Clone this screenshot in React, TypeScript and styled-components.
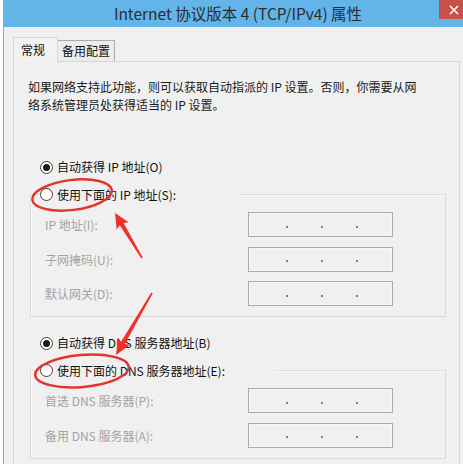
import React from "react";
import styled, { createGlobalStyle } from "styled-components";

const GlobalStyle = createGlobalStyle`
  html, body { margin: 0; padding: 0; background: #f0f0f0; }
  body {
    font-family: "Noto Sans CJK SC", "Noto Sans", "Liberation Sans", sans-serif;
    font-size: 12px;
    color: #1a1a1a;
  }
  * { box-sizing: border-box; }
`;

const Frame = styled.div`
  position: relative;
  width: 463px;
  height: 464px;
  overflow: hidden;
  display: flex;
  background: #ffffff;
  padding-left: 3px;
`;

const Window = styled.div`
  flex: 1;
  display: flex;
  flex-direction: column;
  border-left: 1px solid #8ea6c2;
  background: #f0f0f0;
  min-width: 0;
`;

const TitleBar = styled.div`
  height: 27px;
  flex-shrink: 0;
  display: flex;
  align-items: flex-start;
  background: #62b4e9;
`;

const Title = styled.div`
  flex: 1;
  min-width: 0;
  height: 27px;
  padding-left: 33px;
  text-align: center;
  font-size: 15.5px;
  line-height: 27px;
  color: #2d2d2d;
  white-space: nowrap;
`;

const CloseButton = styled.div`
  flex-shrink: 0;
  width: 30px;
  height: 19px;
  margin-right: -6px;
  background: #c94f4a;
  display: flex;
  align-items: center;
  justify-content: center;
`;

const Body = styled.div`
  flex: 1;
  display: flex;
  flex-direction: column;
  padding: 10px 3px 0 9px;
  min-height: 0;
`;

const TabStrip = styled.div`
  display: flex;
  align-items: flex-end;
  position: relative;
  z-index: 1;
  margin-bottom: -1px;
`;

const Tab = styled.div<{ $active?: boolean }>`
  background: ${(p) => (p.$active ? "#f2f2f2" : "#ececec")};
  border: 1px solid ${(p) => (p.$active ? "#d6d6d6" : "#acacac")};
  border-bottom: none;
  border-left: ${(p) => (p.$active ? "1px solid #d6d6d6" : "none")};
  height: ${(p) => (p.$active ? "25px" : "21px")};
  margin-bottom: ${(p) => (p.$active ? "0" : "1px")};
  padding: ${(p) => (p.$active ? "3px 12px 0 7px" : "1px 4px 0 4px")};
  line-height: 18px;
  font-size: 12px;
  color: #111;
  white-space: nowrap;
`;

const Panel = styled.div`
  flex: 1;
  border: 1px solid #d6d6d6;
  background: #f0f0f0;
  padding: 16px 0 0 14px;
  margin-bottom: -12px;
  display: flex;
  flex-direction: column;
  align-items: flex-start;
`;

const Intro = styled.p`
  margin: 0;
  width: 396px;
  line-height: 17.5px;
  color: #1a1a1a;
`;

const RadioRow = styled.div<{ $mt: number }>`
  display: flex;
  align-items: center;
  gap: 4px;
  height: 18px;
  margin-top: ${(p) => p.$mt}px;
  margin-left: 12px;
  line-height: 18px;
  color: #111;
  white-space: nowrap;
`;

const RadioCircle = styled.span<{ $checked?: boolean }>`
  width: 13px;
  height: 13px;
  flex-shrink: 0;
  border-radius: 50%;
  border: 1px solid #3c3c3c;
  background: #ffffff;
  display: flex;
  align-items: center;
  justify-content: center;
  &::after {
    content: "";
    display: ${(p) => (p.$checked ? "block" : "none")};
    width: 7px;
    height: 7px;
    border-radius: 50%;
    background: #1c1c1c;
  }
`;

const Group = styled.fieldset`
  width: 416px;
  margin: 9.5px 0 0 2px;
  padding: 0 0 10px 0;
  border: 1px solid #d9d9d9;
  box-shadow: inset 1px 1px 0 #fafafa;
  min-width: 0;
`;

const Legend = styled.legend<{ $width: number }>`
  margin-left: 9px;
  padding: 0;
  width: ${(p) => p.$width}px;
  height: 18px;
  display: flex;
  align-items: center;
  gap: 4px;
  line-height: 18px;
  color: #111;
  white-space: nowrap;
  background: #f0f0f0;
`;

const Fields = styled.div`
  display: flex;
  flex-direction: column;
  gap: 9.5px;
  padding: 8.5px 0 0 14px;
`;

const FieldRow = styled.div`
  display: grid;
  grid-template-columns: 203px 145px;
  align-items: center;
  height: 25px;
`;

const FieldLabel = styled.span`
  color: #a3a3a3;
  white-space: nowrap;
`;

const IpBox = styled.div`
  width: 145px;
  height: 25px;
  border: 1px solid #ababab;
  box-shadow: inset 0 0 0 1px #f7f7f7;
  background: #f0f0f0;
  display: flex;
  align-items: center;
  justify-content: center;
  gap: 33px;
  padding: 4px 0 0 3px;
`;

const Dot = styled.span`
  width: 2px;
  height: 2px;
  background: #808080;
`;

const Overlay = styled.svg`
  position: absolute;
  left: 0;
  top: 0;
  pointer-events: none;
`;

const IpField: React.FC<{ label: string }> = ({ label }) => (
  <FieldRow>
    <FieldLabel>{label}</FieldLabel>
    <IpBox>
      <Dot />
      <Dot />
      <Dot />
    </IpBox>
  </FieldRow>
);

function arrowPoints(tip: [number, number], tail: [number, number], headLen: number, headHalf: number, shaftBase: number, shaftTail: number) {
  const dx = tail[0] - tip[0];
  const dy = tail[1] - tip[1];
  const len = Math.hypot(dx, dy);
  const ux = dx / len;
  const uy = dy / len;
  const px = uy;
  const py = -ux;
  const bx = tip[0] + ux * headLen;
  const by = tip[1] + uy * headLen;
  const pts: [number, number][] = [
    tip,
    [bx + px * headHalf, by + py * headHalf],
    [bx + px * shaftBase - ux * 2, by + py * shaftBase - uy * 2],
    [tail[0] + px * shaftTail, tail[1] + py * shaftTail],
    [tail[0] - px * shaftTail, tail[1] - py * shaftTail],
    [bx - px * shaftBase - ux * 2, by - py * shaftBase - uy * 2],
    [bx - px * headHalf, by - py * headHalf],
  ];
  return pts.map((p) => `${p[0].toFixed(1)},${p[1].toFixed(1)}`).join(" ");
}

const Annotations: React.FC = () => (
  <Overlay width={463} height={464} viewBox="0 0 463 464">
    <ellipse cx={72} cy={195} rx={40} ry={15} transform="rotate(-7 72 195)" fill="none" stroke="#e8322c" strokeWidth={2.4} />
    <ellipse cx={82} cy={371} rx={47} ry={16} transform="rotate(-5 82 371)" fill="none" stroke="#e8322c" strokeWidth={2.4} />
    <polygon points={arrowPoints([115, 213], [142, 258], 15, 7, 2.2, 0.8)} fill="#f0302a" />
    <polygon points={arrowPoints([116, 355], [152, 293], 16, 7, 2.2, 0.8)} fill="#f0302a" />
  </Overlay>
);

export default function App() {
  return (
    <>
      <GlobalStyle />
      <Frame>
        <Window>
          <TitleBar>
            <Title>Internet 协议版本 4 (TCP/IPv4) 属性</Title>
            <CloseButton>
              <svg width="10" height="10" viewBox="0 0 10 10">
                <path d="M1 1 L9 9 M9 1 L1 9" stroke="#ffffff" strokeWidth="1.6" />
              </svg>
            </CloseButton>
          </TitleBar>
          <Body>
            <TabStrip>
              <Tab $active>常规</Tab>
              <Tab>备用配置</Tab>
            </TabStrip>
            <Panel>
              <Intro>
                如果网络支持此功能，则可以获取自动指派的 IP 设置。否则，你需要从网络系统管理员处获得适当的 IP 设置。
              </Intro>
              <RadioRow $mt={45}>
                <RadioCircle $checked />
                自动获得 IP 地址(O)
              </RadioRow>
              <Group>
                <Legend $width={200}>
                  <RadioCircle />
                  使用下面的 IP 地址(S):
                </Legend>
                <Fields>
                  <IpField label="IP 地址(I):" />
                  <IpField label="子网掩码(U):" />
                  <IpField label="默认网关(D):" />
                </Fields>
              </Group>
              <RadioRow $mt={17}>
                <RadioCircle $checked />
                自动获得 DNS 服务器地址(B)
              </RadioRow>
              <Group>
                <Legend $width={237}>
                  <RadioCircle />
                  使用下面的 DNS 服务器地址(E):
                </Legend>
                <Fields>
                  <IpField label="首选 DNS 服务器(P):" />
                  <IpField label="备用 DNS 服务器(A):" />
                </Fields>
              </Group>
            </Panel>
          </Body>
        </Window>
        <Annotations />
      </Frame>
    </>
  );
}
